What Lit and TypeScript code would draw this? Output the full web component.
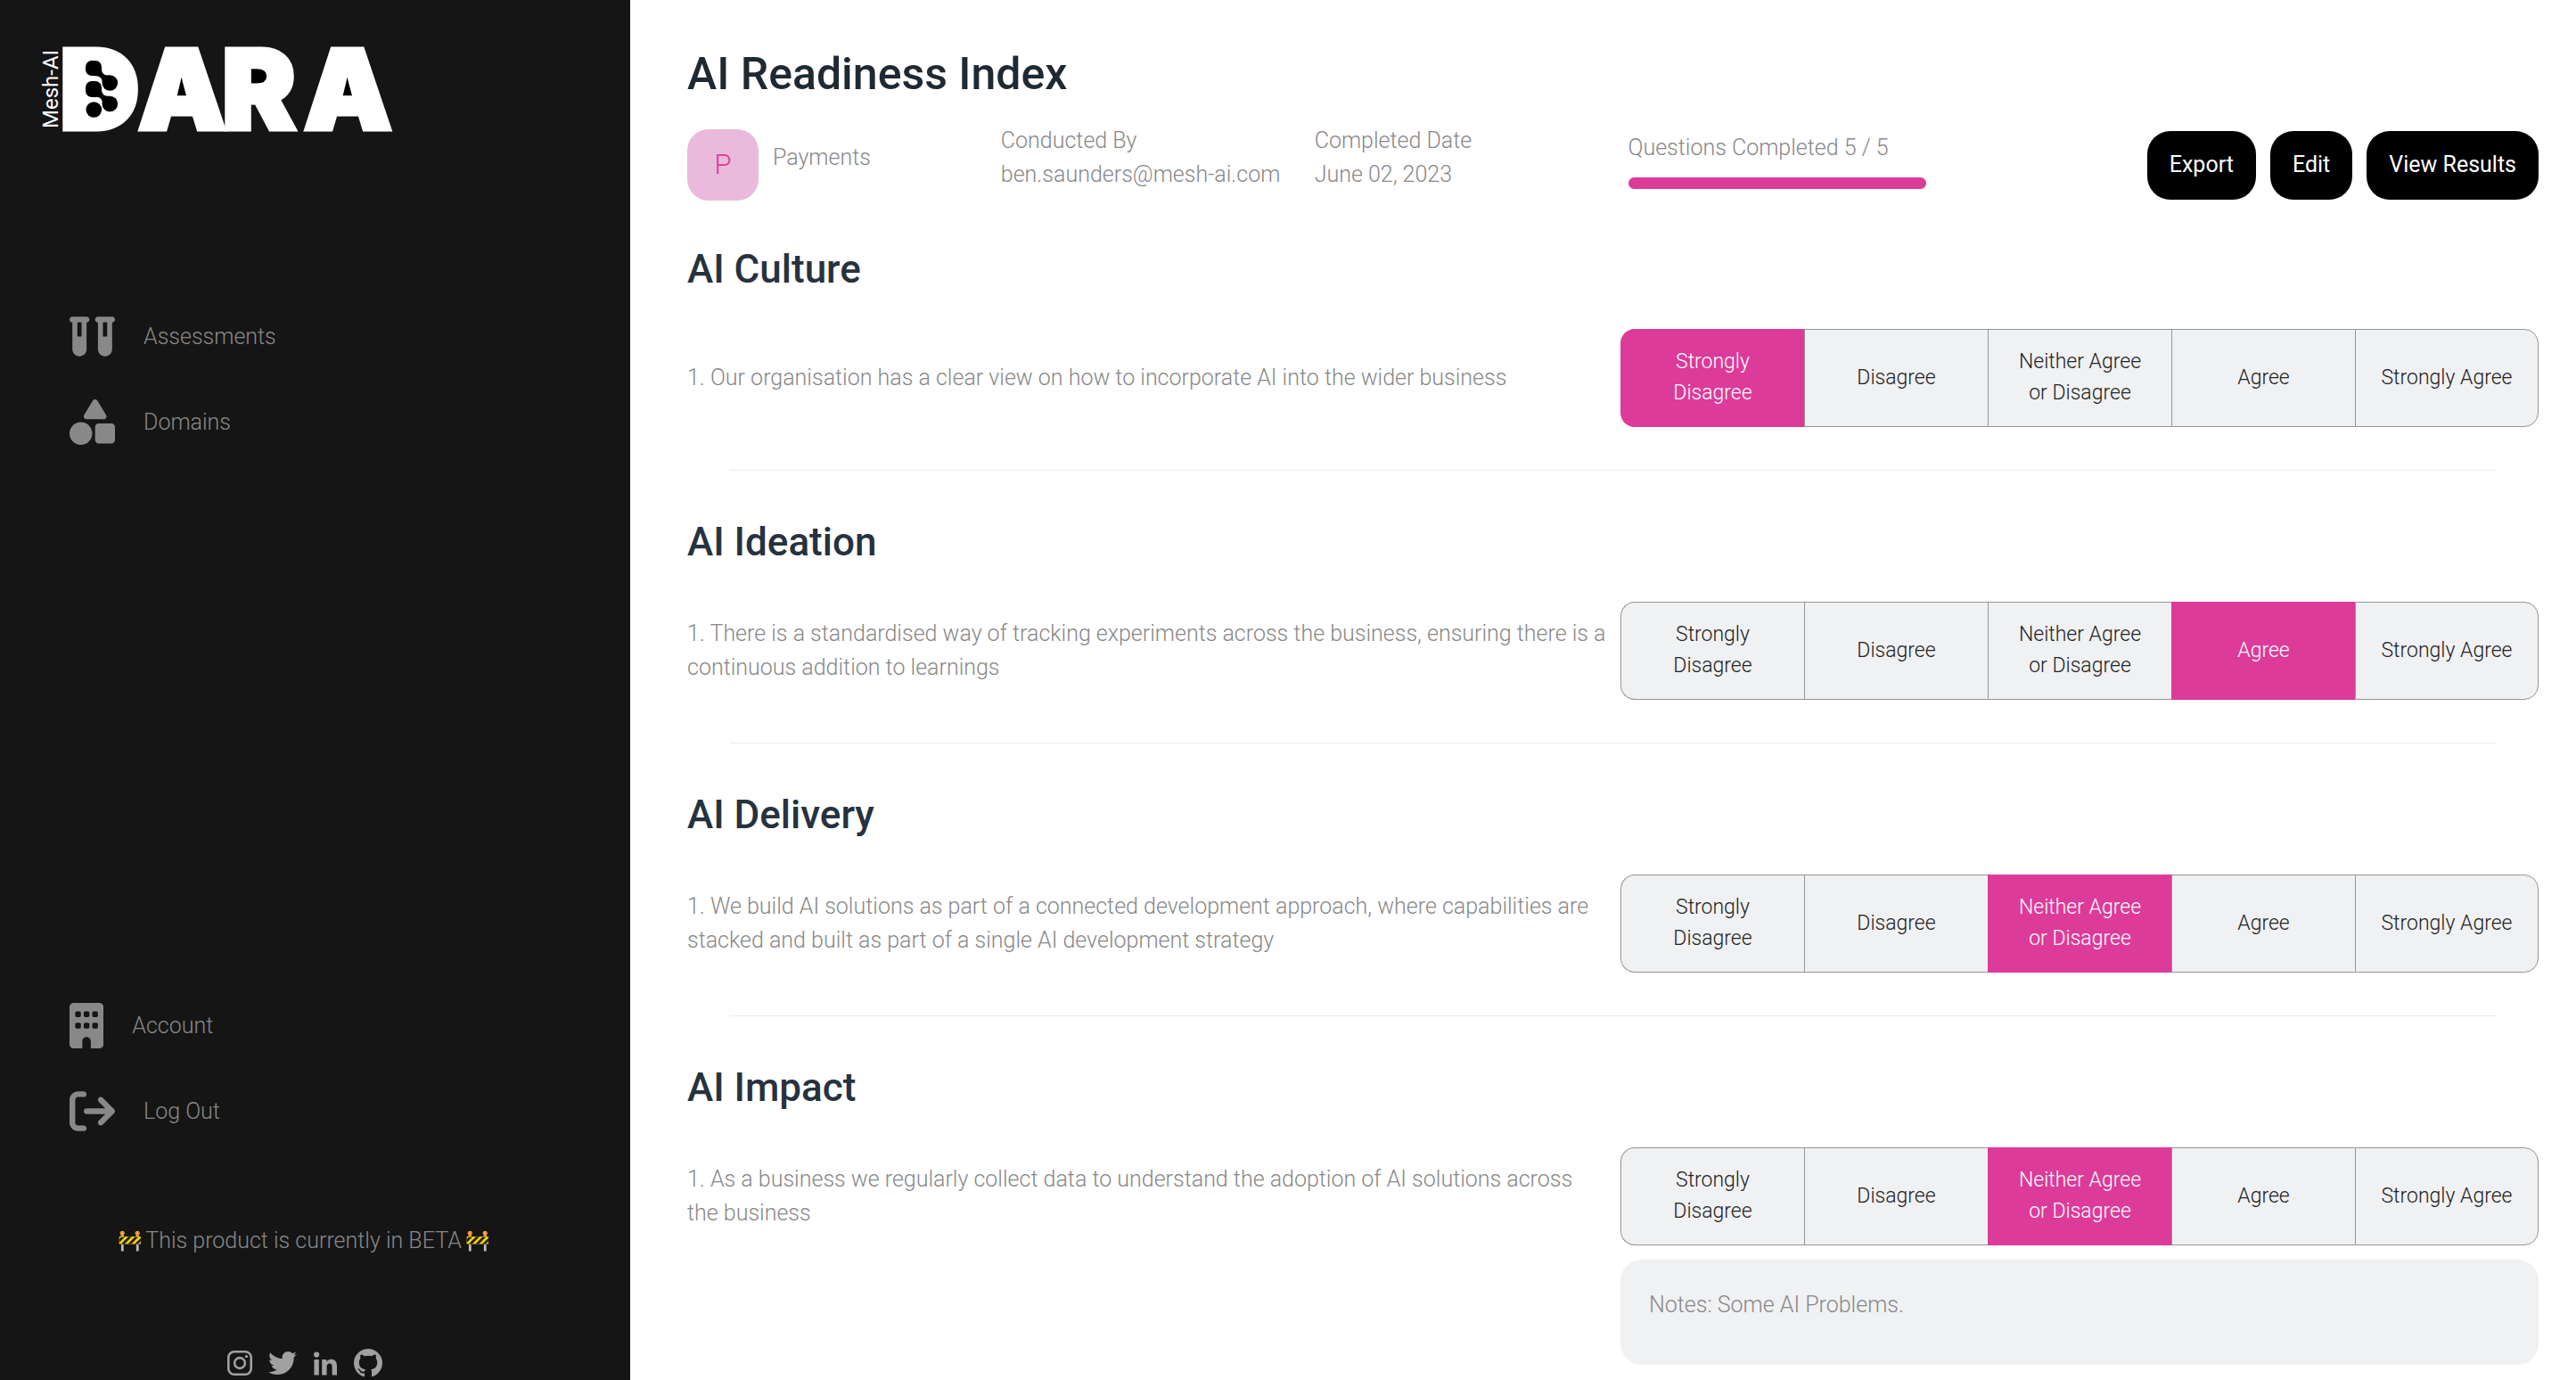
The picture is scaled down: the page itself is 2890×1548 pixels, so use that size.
import { LitElement, html, svg, css } from "lit";
import { customElement, property, state } from "lit/decorators.js";
import { classMap } from "lit/directives/class-map.js";

interface Section {
  id: string;
  title: string;
  question: string;
  answer: number;
  notes?: string;
}

const TOTAL_QUESTIONS = 5;

const OPTIONS = ["Strongly Disagree", "Disagree", "Neither Agree or Disagree", "Agree", "Strongly Agree"];

const SECTIONS: Section[] = [
  {
    id: "culture",
    title: "AI Culture",
    question: "1. Our organisation has a clear view on how to incorporate AI into the wider business",
    answer: 0,
  },
  {
    id: "ideation",
    title: "AI Ideation",
    question:
      "1. There is a standardised way of tracking experiments across the business, ensuring there is a continuous addition to learnings",
    answer: 3,
  },
  {
    id: "delivery",
    title: "AI Delivery",
    question:
      "1. We build AI solutions as part of a connected development approach, where capabilities are stacked and built as part of a single AI development strategy",
    answer: 2,
  },
  {
    id: "impact",
    title: "AI Impact",
    question:
      "1. As a business we regularly collect data to understand the adoption of AI solutions across the business",
    answer: 2,
    notes: "Some AI Problems.",
  },
];

const ICONS = {
  vials: {
    box: "0 0 512 512",
    d: "M0 64C0 46.3 14.3 32 32 32H88h48 56c17.7 0 32 14.3 32 32s-14.3 32-32 32V400c0 44.2-35.8 80-80 80s-80-35.8-80-80V96C14.3 96 0 81.7 0 64zM136 96H88V256h48V96zM288 64c0-17.7 14.3-32 32-32h56 48 56c17.7 0 32 14.3 32 32s-14.3 32-32 32V400c0 44.2-35.8 80-80 80s-80-35.8-80-80V96c-17.7 0-32-14.3-32-32zM424 96H376V256h48V96z",
  },
  shapes: {
    box: "0 0 512 512",
    d: "M315.4 15.5C309.7 5.9 299.2 0 288 0s-21.7 5.9-27.4 15.5l-96 160c-5.9 9.9-6.1 22.2-.4 32.2s16.3 16.2 27.8 16.2H384c11.5 0 22.2-6.2 27.8-16.2s5.5-22.3-.4-32.2l-96-160zM288 312V456c0 22.1 17.9 40 40 40H472c22.1 0 40-17.9 40-40V312c0-22.1-17.9-40-40-40H328c-22.1 0-40 17.9-40 40zM128 512a128 128 0 1 0 0-256 128 128 0 1 0 0 256z",
  },
  building: {
    box: "0 0 384 512",
    d: "M48 0C21.5 0 0 21.5 0 48V464c0 26.5 21.5 48 48 48h96V432c0-26.5 21.5-48 48-48s48 21.5 48 48v80h96c26.5 0 48-21.5 48-48V48c0-26.5-21.5-48-48-48H48zM64 240c0-8.8 7.2-16 16-16h32c8.8 0 16 7.2 16 16v32c0 8.8-7.2 16-16 16H80c-8.8 0-16-7.2-16-16V240zm112-16h32c8.8 0 16 7.2 16 16v32c0 8.8-7.2 16-16 16H176c-8.8 0-16-7.2-16-16V240c0-8.8 7.2-16 16-16zm80 16c0-8.8 7.2-16 16-16h32c8.8 0 16 7.2 16 16v32c0 8.8-7.2 16-16 16H272c-8.8 0-16-7.2-16-16V240zM80 96h32c8.8 0 16 7.2 16 16v32c0 8.8-7.2 16-16 16H80c-8.8 0-16-7.2-16-16V112c0-8.8 7.2-16 16-16zm80 16c0-8.8 7.2-16 16-16h32c8.8 0 16 7.2 16 16v32c0 8.8-7.2 16-16 16H176c-8.8 0-16-7.2-16-16V112zM272 96h32c8.8 0 16 7.2 16 16v32c0 8.8-7.2 16-16 16H272c-8.8 0-16-7.2-16-16V112c0-8.8 7.2-16 16-16z",
  },
  logout: {
    box: "0 0 512 512",
    d: "M502.6 278.6c12.5-12.5 12.5-32.8 0-45.3l-128-128c-12.5-12.5-32.8-12.5-45.3 0s-12.5 32.8 0 45.3L402.7 224 192 224c-17.7 0-32 14.3-32 32s14.3 32 32 32l210.7 0-73.4 73.4c-12.5 12.5-12.5 32.8 0 45.3s32.8 12.5 45.3 0l128-128zM160 96c17.7 0 32-14.3 32-32s-14.3-32-32-32L96 32C43 32 0 75 0 128L0 384c0 53 43 96 96 96l64 0c17.7 0 32-14.3 32-32s-14.3-32-32-32l-64 0c-17.7 0-32-14.3-32-32l0-256c0-17.7 14.3-32 32-32l64 0z",
  },
};

const SOCIAL = [
  {
    name: "Instagram",
    box: "0 0 32 32",
    shape: svg`<g fill="none" stroke="currentColor" stroke-width="2.6"><rect x="3.3" y="3.3" width="25.4" height="25.4" rx="6.5"/><circle cx="16" cy="16" r="5.9"/></g><circle cx="23.5" cy="8.6" r="1.7" fill="currentColor"/>`,
  },
  {
    name: "Twitter",
    box: "0 0 512 512",
    shape: svg`<path fill="currentColor" d="M459.37 151.716c.325 4.548.325 9.097.325 13.645 0 138.72-105.583 298.558-298.558 298.558-59.452 0-114.68-17.219-161.137-47.106 8.447.974 16.568 1.299 25.34 1.299 49.055 0 94.213-16.568 130.274-44.832-46.132-.975-84.792-31.188-98.112-72.772 6.498.974 12.995 1.624 19.818 1.624 9.421 0 18.843-1.3 27.614-3.573-48.081-9.747-84.143-51.98-84.143-102.985v-1.299c13.969 7.797 30.214 12.67 47.431 13.319-28.264-18.843-46.781-51.005-46.781-87.391 0-19.492 5.197-37.36 14.294-52.954 51.655 63.675 129.3 105.258 216.365 109.807-1.624-7.797-2.599-15.918-2.599-24.04 0-57.828 46.782-104.934 104.934-104.934 30.213 0 57.502 12.67 76.67 33.137 23.715-4.548 46.456-13.32 66.599-25.34-7.798 24.366-24.366 44.833-46.132 57.827 21.117-2.273 41.584-8.122 60.426-16.243-14.292 20.791-32.161 39.308-52.628 54.253z"/>`,
  },
  {
    name: "LinkedIn",
    box: "-52 -60 552 552",
    shape: svg`<path fill="currentColor" d="M100.28 448H7.4V148.9h92.88zM53.79 108.1C24.09 108.1 0 83.5 0 53.8a53.79 53.79 0 0 1 107.58 0c0 29.7-24.1 54.3-53.79 54.3zM447.9 448h-92.68V302.4c0-34.7-.7-79.2-48.29-79.2-48.29 0-55.69 37.7-55.69 76.7V448h-92.78V148.9h89.08v40.8h1.3c12.4-23.5 42.69-48.3 87.88-48.3 94 0 111.28 61.9 111.28 142.3V448z"/>`,
  },
  {
    name: "GitHub",
    box: "0 0 16 16",
    shape: svg`<path fill="currentColor" d="M8 0C3.58 0 0 3.58 0 8c0 3.54 2.29 6.53 5.47 7.59.4.07.55-.17.55-.38 0-.19-.01-.82-.01-1.49-2.01.37-2.53-.49-2.69-.94-.09-.23-.48-.94-.82-1.13-.28-.15-.68-.52-.01-.53.63-.01 1.08.58 1.23.82.72 1.21 1.87.87 2.33.66.07-.52.28-.87.51-1.07-1.78-.2-3.64-.89-3.64-3.95 0-.87.31-1.59.82-2.15-.08-.2-.36-1.02.08-2.12 0 0 .67-.21 2.2.82.64-.18 1.32-.27 2-.27s1.36.09 2 .27c1.53-1.04 2.2-.82 2.2-.82.44 1.1.16 1.92.08 2.12.51.56.82 1.27.82 2.15 0 3.07-1.87 3.75-3.65 3.95.29.25.54.73.54 1.48 0 1.07-.01 1.93-.01 2.2 0 .21.15.46.55.38A8.01 8.01 0 0 0 16 8c0-4.42-3.58-8-8-8z"/>`,
  },
];

@customElement("side-bar")
class SideBar extends LitElement {
  static styles = css`
    :host {
      box-sizing: border-box;
      display: flex;
      flex-direction: column;
      padding: 0 26px 3px 0;
      background: #151515;
      color: #888;
      font: 300 25px/38px Roboto, "Liberation Sans", sans-serif;
    }
    .logo {
      display: block;
      width: 500px;
      height: 200px;
      margin: 0 0 152px;
    }
    .wordmark {
      font: 900 124px Inter, sans-serif;
      fill: #fff;
      stroke: #fff;
      stroke-width: 5px;
      stroke-linejoin: miter;
    }
    .maker {
      font: 400 24px Roboto, sans-serif;
      fill: #fff;
    }
    .nav {
      display: flex;
      flex-direction: column;
      align-items: flex-start;
      gap: 45px;
      padding-left: 78px;
    }
    .bottom {
      margin-top: auto;
    }
    .link {
      display: flex;
      align-items: center;
      gap: 32px;
      height: 51px;
      color: inherit;
      text-decoration: none;
    }
    .icon {
      display: block;
      height: 51px;
      fill: currentColor;
    }
    .beta {
      display: flex;
      justify-content: center;
      gap: 4px;
      margin: 101px 0 102px;
    }
    .emoji {
      font-size: 22px;
    }
    .social {
      display: flex;
      justify-content: center;
      gap: 16px;
      color: #a0a0a0;
    }
    .social a {
      color: inherit;
    }
    .social svg {
      display: block;
      width: 32px;
      height: 32px;
    }
  `;

  private link(icon: keyof typeof ICONS, label: string) {
    const { box, d } = ICONS[icon];
    return html`<a class="link" href="#${icon}">
      <svg class="icon" viewBox=${box} aria-hidden="true"><path d=${d} /></svg>
      <span>${label}</span>
    </a>`;
  }

  render() {
    return html`
      <svg class="logo" viewBox="0 0 500 200" role="img" aria-label="Mesh-AI DARA">
        <path d="M187 118L204 68L222 118ZM278 70H318V98H278ZM371 118L389 68L407 118Z" fill="#000" />
        <text class="wordmark" y="145"><tspan x="67">D</tspan><tspan x="155">A</tspan><tspan x="249">R</tspan><tspan x="341">A</tspan></text>
        <path d="M90 64H118C136 64 140 84 140 99C140 116 134 136 118 136H90Z" fill="#fff" />
        <g fill="#000">
          <rect x="96" y="68" width="18" height="17" rx="7" />
          <rect x="96" y="91" width="18" height="18" rx="7" />
          <circle cx="123.3" cy="93" r="8.8" />
          <circle cx="123.3" cy="116.5" r="8.8" />
          <circle cx="105.3" cy="123" r="8.8" />
          <path d="M114 77C114 83 117 84.5 123 84.5L115 93C114.5 88 113 85 105 85Z" />
          <path d="M114 100C114 106 117 107.8 123 107.8L115 116C114.5 111 113 108.5 105 108.5Z" />
        </g>
        <text class="maker" transform="translate(65 144) rotate(-90)">Mesh-AI</text>
      </svg>
      <nav class="nav">${this.link("vials", "Assessments")} ${this.link("shapes", "Domains")}</nav>
      <nav class="nav bottom">${this.link("building", "Account")} ${this.link("logout", "Log Out")}</nav>
      <p class="beta">
        <span class="emoji">🚧</span><span>This product is currently in BETA</span><span class="emoji">🚧</span>
      </p>
      <div class="social">
        ${SOCIAL.map(
          (s) => html`<a href="#${s.name}" aria-label=${s.name}><svg viewBox=${s.box}>${s.shape}</svg></a>`
        )}
      </div>
    `;
  }
}

@customElement("answer-scale")
class AnswerScale extends LitElement {
  @property() name = "";
  @property() question = "";
  @property({ type: Number }) value = 0;

  static styles = css`
    :host {
      display: block;
    }
    .scale {
      display: grid;
      grid-template-columns: repeat(5, 1fr);
      margin: 0;
      padding: 0;
      border: 0;
      min-width: 0;
    }
    .option {
      position: relative;
      box-sizing: border-box;
      display: flex;
      align-items: center;
      justify-content: center;
      padding: 18px 24px 20px;
      border: 1px solid #939597;
      border-right-width: 0;
      background: #f0f1f3;
      color: #222;
      font: 300 23px/35px Roboto, "Liberation Sans", sans-serif;
      text-align: center;
      cursor: pointer;
    }
    .option:first-child {
      border-radius: 16px 0 0 16px;
    }
    .option:last-child {
      border-right-width: 1px;
      border-radius: 0 16px 16px 0;
    }
    .chosen {
      background: #dc3b99;
      border-color: #dc3b99;
      color: #fff;
    }
    input {
      position: absolute;
      inset: 0;
      margin: 0;
      opacity: 0;
      cursor: pointer;
    }
  `;

  render() {
    return html`<fieldset class="scale" aria-label=${this.question}>
      ${OPTIONS.map(
        (text, i) => html`<label class=${classMap({ option: true, chosen: i === this.value })}>
          <input
            type="radio"
            name=${this.name}
            .checked=${i === this.value}
            @change=${() => {
              this.value = i;
            }}
          />
          <span>${text}</span>
        </label>`
      )}
    </fieldset>`;
  }
}

@customElement("app-root")
class AppRoot extends LitElement {
  @state() private completed = 5;

  static styles = css`
    :host {
      display: grid;
      grid-template-columns: 707px minmax(0, 1fr);
      min-height: 100vh;
      background: #fff;
      color: #888;
      font: 300 25px/38px Roboto, "Liberation Sans", sans-serif;
    }
    main {
      padding: 53px 42px 16px 64px;
    }
    h1,
    h2,
    p {
      margin: 0;
    }
    h1 {
      font-size: 50px;
      line-height: 60px;
      font-weight: 500;
      color: #1f2933;
    }
    h2 {
      font-size: 44px;
      line-height: 52px;
      font-weight: 500;
      color: #27323e;
    }
    .meta {
      display: grid;
      grid-template-columns: repeat(4, minmax(0, 1fr)) minmax(0, 2fr);
      column-gap: 17px;
      align-items: center;
      margin: 26px 0 45px;
    }
    .team {
      display: flex;
      align-items: center;
      gap: 16px;
    }
    .avatar {
      display: grid;
      place-items: center;
      width: 80px;
      height: 80px;
      border-radius: 24px;
      background: #e9badb;
      color: #dc3b99;
      font-size: 31px;
    }
    .fact,
    .team-name {
      padding-bottom: 16px;
    }
    .progress {
      display: grid;
      gap: 14px;
      padding-bottom: 11px;
    }
    progress {
      display: block;
      appearance: none;
      width: 100%;
      height: 13px;
      border: 0;
    }
    progress::-webkit-progress-bar {
      border-radius: 7px;
      background: #e9badb;
    }
    progress::-webkit-progress-value {
      border-radius: 7px;
      background: #dc3b99;
    }
    .actions {
      display: flex;
      justify-content: flex-end;
      gap: 16px;
    }
    button {
      height: 77px;
      padding: 0 25px;
      border: 0;
      border-radius: 26px;
      background: #000;
      color: #fff;
      font: 400 25px/38px Roboto, "Liberation Sans", sans-serif;
      cursor: pointer;
    }
    .row {
      display: grid;
      grid-template-columns: minmax(0, 1032fr) minmax(0, 1030fr);
      gap: 16px 15px;
      align-items: center;
      margin-top: 41px;
    }
    .notes {
      grid-column: 2;
      padding: 32px 32px 48px;
      border-radius: 24px;
      background: #f0f1f3;
    }
    hr {
      height: 1px;
      margin: 48px 48px 54px;
      border: 0;
      background: #ececef;
    }
  `;

  private section(s: Section, i: number) {
    return html`
      ${i ? html`<hr />` : ""}
      <section>
        <h2>${s.title}</h2>
        <div class="row">
          <p>${s.question}</p>
          <answer-scale name=${s.id} question=${s.question} .value=${s.answer}></answer-scale>
          ${s.notes ? html`<p class="notes">Notes: ${s.notes}</p>` : ""}
        </div>
      </section>
    `;
  }

  render() {
    return html`
      <side-bar></side-bar>
      <main>
        <h1>AI Readiness Index</h1>
        <div class="meta">
          <div class="team"><span class="avatar">P</span><span class="team-name">Payments</span></div>
          <div class="fact">
            <div>Conducted By</div>
            <div>ben.saunders@mesh-ai.com</div>
          </div>
          <div class="fact">
            <div>Completed Date</div>
            <div>June 02, 2023</div>
          </div>
          <div class="progress">
            <label for="completed">Questions Completed ${this.completed} / ${TOTAL_QUESTIONS}</label>
            <progress id="completed" value=${this.completed} max=${TOTAL_QUESTIONS}></progress>
          </div>
          <div class="actions">
            <button type="button">Export</button>
            <button type="button">Edit</button>
            <button type="button">View Results</button>
          </div>
        </div>
        ${SECTIONS.map((s, i) => this.section(s, i))}
      </main>
    `;
  }
}
